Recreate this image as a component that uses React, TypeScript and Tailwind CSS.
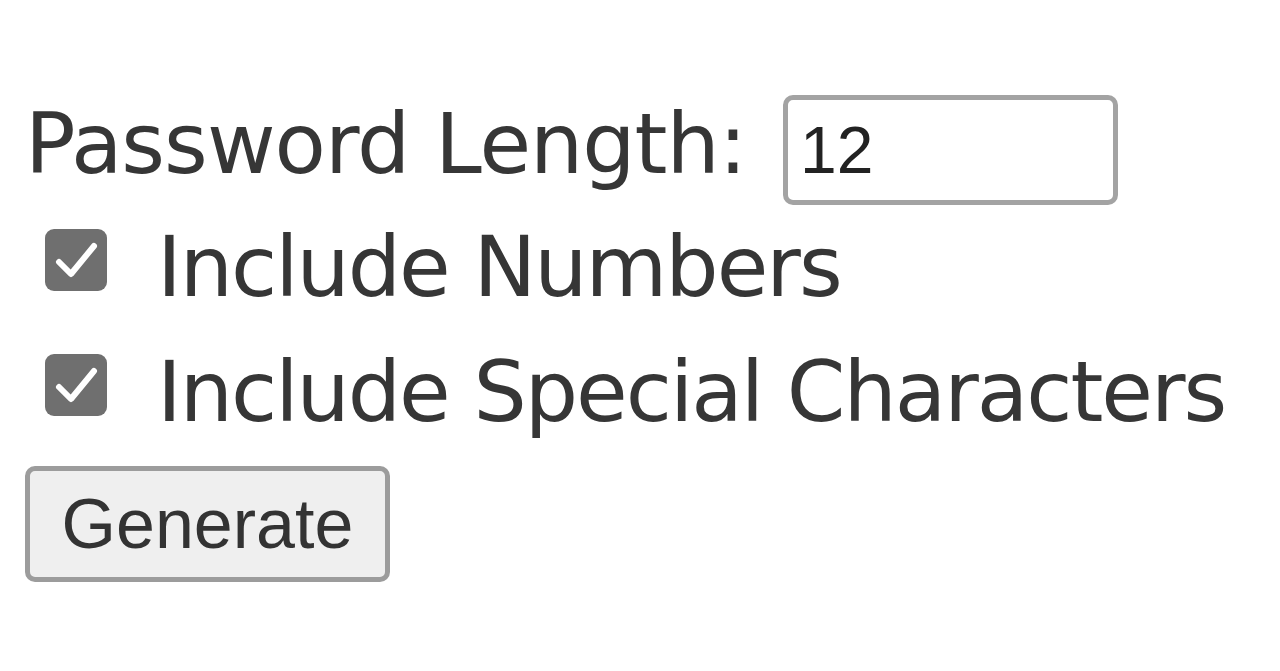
import { useState } from "react";

// Big checked checkbox: grey rounded square with a white tick.
function Check({ checked, onToggle }: { checked: boolean; onToggle: () => void }) {
  return (
    <button
      type="button"
      onClick={onToggle}
      className={`mt-[24px] ml-[20px] grid h-[62px] w-[62px] shrink-0 place-items-center rounded-[9px] ${
        checked ? "bg-[#6f6f6f]" : "border-[5px] border-[#767676] bg-white"
      }`}
    >
      {checked && (
        <svg viewBox="0 0 62 62" className="h-[62px] w-[62px]">
          <path d="M14 33 L26 45 L49 17" fill="none" stroke="#ffffff" strokeWidth="6" strokeLinecap="round" strokeLinejoin="round" />
        </svg>
      )}
    </button>
  );
}

export default function App() {
  const [length, setLength] = useState("12");
  const [numbers, setNumbers] = useState(true);
  const [special, setSpecial] = useState(true);

  return (
    <div className="min-h-screen bg-white pt-[95px] pl-[25px] text-[#363636]">
      <div className="flex items-baseline gap-[37px]">
        <span className="text-[84px] leading-none tracking-[-1px] [font-family:'DejaVu_Sans',sans-serif]">Password Length:</span>
        <input
          value={length}
          onChange={(e) => setLength(e.target.value)}
          className="h-[110px] w-[335px] rounded-[10px] border-[5px] border-[#a3a3a3] bg-white pl-[12px] text-[66px] text-[#222] outline-none [font-family:'Liberation_Sans',Arial,sans-serif]"
        />
      </div>

      <div className="flex items-start gap-[50px] leading-[125px]">
        <Check checked={numbers} onToggle={() => setNumbers((v) => !v)} />
        <span className="text-[84px] tracking-[-2px] [font-family:'DejaVu_Sans',sans-serif]">Include Numbers</span>
      </div>
      <div className="flex items-start gap-[50px] leading-[125px]">
        <Check checked={special} onToggle={() => setSpecial((v) => !v)} />
        <span className="text-[84px] tracking-[-2px] [font-family:'DejaVu_Sans',sans-serif]">Include Special Characters</span>
      </div>

      <button
        type="button"
        className="mt-[11px] h-[116px] w-[365px] rounded-[10px] border-[5px] border-[#9c9c9c] bg-[#efefef] text-[70px] text-[#333] [font-family:'Liberation_Sans',Arial,sans-serif]"
      >
        Generate
      </button>
    </div>
  );
}
